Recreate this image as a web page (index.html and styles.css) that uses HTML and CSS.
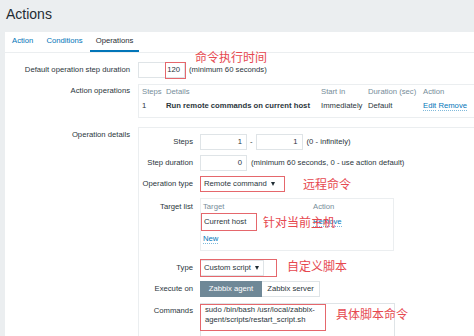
FILE: index.html
```html
<!DOCTYPE html>
<html lang="en">
<head>
<meta charset="utf-8">
<title>Actions</title>
<link rel="stylesheet" href="styles.css">
</head>
<body>
<div class="page">
  <h1 class="title">Actions</h1>
  <div class="panel">
    <nav class="tabs">
      <a class="tab">Action</a>
      <a class="tab">Conditions</a>
      <a class="tab active">Operations</a>
    </nav>
    <div class="form">
      <div class="row row-default">
        <div class="lbl">Default operation step duration</div>
        <div class="inline">
          <span class="box num w47">120</span>
          <span class="hint">(minimum 60 seconds)</span>
        </div>
      </div>

      <div class="row row-ops">
        <div class="lbl">Action operations</div>
        <div>
          <table class="ops">
            <colgroup>
              <col class="c1"><col class="c2"><col class="c3"><col class="c4"><col class="c5">
            </colgroup>
            <thead>
              <tr><th>Steps</th><th>Details</th><th>Start in</th><th>Duration (sec)</th><th>Action</th></tr>
            </thead>
            <tbody>
              <tr>
                <td>1</td>
                <td class="strong">Run remote commands on current host</td>
                <td>Immediately</td>
                <td>Default</td>
                <td><a class="link">Edit</a> <a class="link">Remove</a></td>
              </tr>
            </tbody>
          </table>
        </div>
      </div>

      <div class="row row-details">
        <div class="lbl">Operation details</div>
        <div class="details">
          <div class="drow">
            <div class="dlbl">Steps</div>
            <div class="inline">
              <span class="box num w47">1</span><span class="dash">-</span><span class="box num w47">1</span>
              <span class="hint">(0 - infinitely)</span>
            </div>
          </div>
          <div class="drow">
            <div class="dlbl">Step duration</div>
            <div class="inline">
              <span class="box num w47">0</span>
              <span class="hint">(minimum 60 seconds, 0 - use action default)</span>
            </div>
          </div>
          <div class="drow">
            <div class="dlbl">Operation type</div>
            <div class="inline">
              <span class="select sel-remote">Remote command<span class="caret"></span></span>
            </div>
          </div>
          <div class="drow drow-target">
            <div class="dlbl">Target list</div>
            <div>
              <div class="targets">
                <div class="th">Target</div>
                <div class="th">Action</div>
                <div class="trow-host"><span class="host">Current host</span></div>
                <div class="trow-act"><a class="link">Remove</a></div>
                <div class="trow-new"><a class="link">New</a></div>
              </div>
            </div>
          </div>
          <div class="drow drow-type">
            <div class="dlbl">Type</div>
            <div class="inline">
              <span class="select sel-custom">Custom script<span class="caret"></span></span>
            </div>
          </div>
          <div class="drow">
            <div class="dlbl">Execute on</div>
            <div class="inline">
              <span class="seg seg-on">Zabbix agent</span><span class="seg seg-off">Zabbix server</span>
            </div>
          </div>
          <div class="drow drow-cmd">
            <div class="dlbl">Commands</div>
            <div>
              <div class="textarea">sudo /bin/bash /usr/local/zabbix-<br>agent/scripts/restart_script.sh</div>
            </div>
          </div>
        </div>
      </div>
    </div>
  </div>

  <div class="note note-1">命令执行时间</div>
  <div class="note note-2">远程命令</div>
  <div class="note note-3">针对当前主机</div>
  <div class="note note-4">自定义脚本</div>
  <div class="note note-5">具体脚本命令</div>
  <div class="mark mark-120"></div>
  <div class="mark mark-type"></div>
  <div class="mark mark-cmd"></div>
</div>
</body>
</html>
```

FILE: styles.css
```css
* { box-sizing: border-box; }
html, body { margin: 0; padding: 0; }
body {
  width: 474px;
  height: 336px;
  overflow: hidden;
  background: #ebeef0;
  font-family: "Liberation Sans", Arial, sans-serif;
  font-size: 7.7px;
  line-height: 10px;
  color: #2b363c;
}
.page { position: relative; height: 336px; }

.title {
  margin: 0;
  height: 32px;
  padding-left: 6px;
  font-size: 14px;
  line-height: 28px;
  font-weight: normal;
  color: #1f2c33;
}

.panel {
  margin-left: 5px;
  height: 304px;
  background: #fff;
  overflow: hidden;
}

.tabs {
  display: flex;
  gap: 1px;
  padding-left: 1px;
  border-bottom: 1px solid #ebeef0;
}
.tab {
  padding: 4px 6px;
  border-bottom: 2px solid transparent;
  color: #0275b8;
}
.tab.active { color: #1f2c33; border-bottom-color: #0275b8; }

.form { padding-top: 9px; }
.row {
  display: grid;
  grid-template-columns: 125px 1fr;
  column-gap: 8px;
}
.lbl { text-align: right; }
.row-default .lbl { align-self: center; }
.row-ops { margin-top: 6px; }
.row-ops .lbl { padding-top: 2px; }
.row-details { margin-top: 9px; }
.row-details .lbl { padding-top: 3px; }

.inline { display: flex; align-items: center; }
.box {
  display: block;
  height: 16px;
  border: 1px solid #dfe4e7;
  background: #fff;
  line-height: 14px;
  padding: 0 4px;
}
.num { text-align: right; }
.w47 { width: 47px; }
.hint { margin-left: 4px; white-space: nowrap; }
.dash { margin: 0 3px; }

.ops {
  width: 100%;
  table-layout: fixed;
  border: 1px solid #ebeef0;
  border-right: none;
  border-collapse: separate;
  border-spacing: 0;
}
.ops .c1 { width: 24px; }
.ops .c2 { width: 155px; }
.ops .c3 { width: 47px; }
.ops .c4 { width: 55px; }
.ops th {
  font-weight: normal;
  text-align: left;
  color: #768d99;
  padding: 2px 0 2px 3px;
  white-space: nowrap;
}
.ops td {
  padding: 2px 0 6px 3px;
  white-space: nowrap;
}
.ops .strong { font-weight: bold; }
.link {
  color: #0275b8;
  border-bottom: 1px dotted rgba(2, 117, 184, 0.5);
}

.details {
  height: 230px;
  border: 1px solid #ebeef0;
  border-right: none;
  border-bottom: none;
  padding-top: 6px;
  display: flex;
  flex-direction: column;
  gap: 5px;
}
.drow {
  display: grid;
  grid-template-columns: 54px 1fr;
  column-gap: 7px;
}
.dlbl { text-align: right; align-self: center; white-space: nowrap; }
.drow-target { margin-top: 1px; }
.drow-target .dlbl { align-self: start; padding-top: 4px; }
.drow-type { margin-top: 4px; }
.drow-cmd { margin-top: 1px; }
.drow-cmd .dlbl { align-self: start; padding-top: 3px; }

.select {
  display: flex;
  align-items: center;
  height: 16px;
  border: 1px solid #dfe4e7;
  padding-left: 3px;
  white-space: nowrap;
}
.caret {
  flex: none;
  width: 0;
  height: 0;
  margin-left: auto;
  border-left: 2.5px solid transparent;
  border-right: 2.5px solid transparent;
  border-top: 4px solid #1f2c33;
}
.sel-remote { width: 85px; padding-right: 11px; border-color: #e5676c; }
.sel-remote .caret { margin-left: 4px; }
.sel-custom { width: 64px; padding-right: 4px; }

.targets {
  width: 194px;
  height: 53px;
  border: 1px solid #ebeef0;
  padding: 3px 0 0 2px;
  display: grid;
  grid-template-columns: 110px 1fr;
  align-content: start;
}
.th { color: #768d99; }
.trow-host { margin-top: 1px; }
.host {
  display: block;
  width: 56px;
  height: 18px;
  margin-left: -2px;
  border: 1px solid #e5676c;
  padding-left: 2px;
  line-height: 16px;
  white-space: nowrap;
}
.trow-act { margin-top: 1px; align-self: center; }
.trow-new { margin-top: 3px; grid-column: 1 / 2; }

.seg {
  display: block;
  height: 16px;
  line-height: 14px;
  text-align: center;
  border: 1px solid #dfe4e7;
  white-space: nowrap;
}
.seg-on { width: 62px; background: #6f8897; border-color: #6f8897; color: #fff; }
.seg-off { width: 58px; border-left: none; }

.textarea {
  width: 195px;
  height: 45px;
  border: 1px solid #dfe4e7;
  padding: 1px 4px;
  line-height: 10px;
}

.note {
  position: absolute;
  font-family: "Noto Sans CJK SC", sans-serif;
  font-size: 12px;
  line-height: 16px;
  color: #e6484f;
  white-space: nowrap;
}
.note-1 { left: 195px; top: 49px; }
.note-2 { left: 303px; top: 176px; }
.note-3 { left: 263px; top: 214px; }
.note-4 { left: 287px; top: 258px; }
.note-5 { left: 336px; top: 306px; }

.mark {
  position: absolute;
  border: 1px solid #e5676c;
}
.mark-120 { left: 165px; top: 62px; width: 21px; height: 17px; }
.mark-type { left: 200px; top: 259px; width: 77px; height: 18px; }
.mark-cmd { left: 200px; top: 304px; width: 126px; height: 27px; }
```
